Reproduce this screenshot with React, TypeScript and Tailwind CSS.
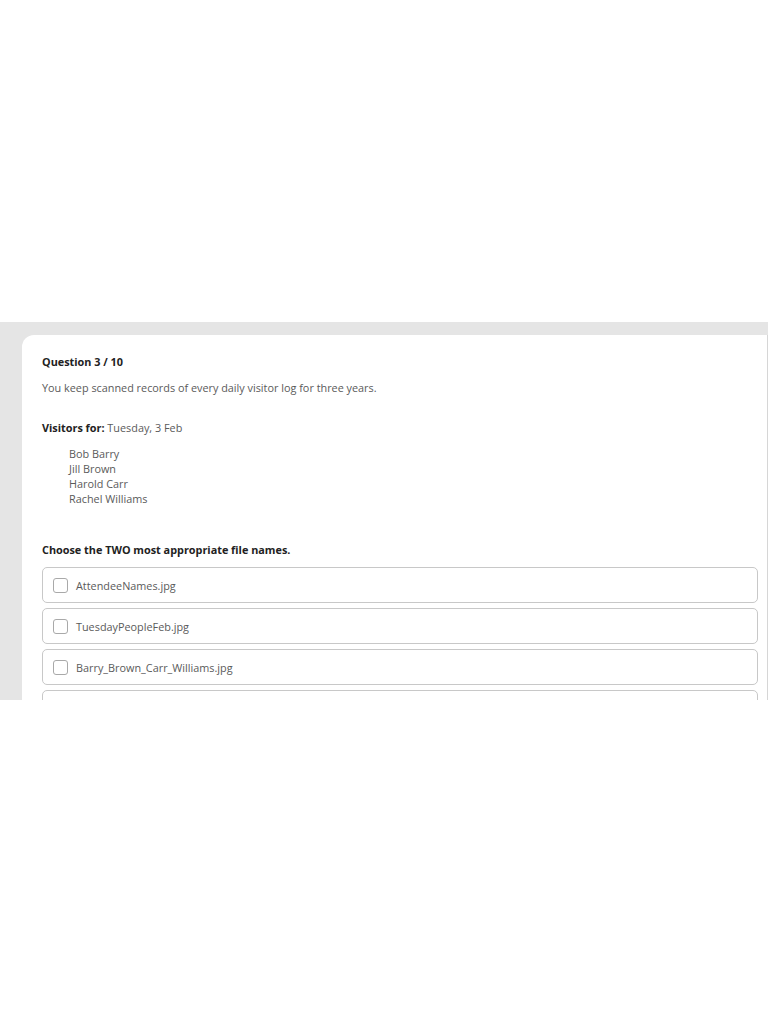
const visitors = ['Bob Barry', 'Jill Brown', 'Harold Carr', 'Rachel Williams']

// the fourth answer is cut off by the panel edge, only its box shows
const options = ['AttendeeNames.jpg', 'TuesdayPeopleFeb.jpg', 'Barry_Brown_Carr_Williams.jpg', '']

export default function App() {
  return (
    <div className="h-[1024px] flex flex-col bg-white font-['Open_Sans',sans-serif] text-[10.85px] leading-[15px]">
      <div className="h-[322px] shrink-0" />
      <div className="h-[378px] shrink-0 overflow-hidden bg-[#e5e5e5] pt-[13px] pl-[22px]">
        <div className="h-full bg-white rounded-tl-[12px] pl-5 pr-[9px] pt-[19px] border-r border-[#d6d6d6]">
          <div className="font-bold text-[#222]">Question 3 / 10</div>
          <p className="mt-[11px] text-[#5a5a5a]">
            You keep scanned records of every daily visitor log for three years.
          </p>
          <p className="mt-[25px] text-[#5a5a5a]">
            <span className="font-bold text-[#222]">Visitors for:</span> Tuesday, 3 Feb
          </p>
          <ul className="mt-[11px] pl-[27px] text-[#5a5a5a]">
            {visitors.map((v) => (
              <li key={v}>{v}</li>
            ))}
          </ul>
          <div className="mt-9 font-bold text-[#222]">Choose the TWO most appropriate file names.</div>
          <div className="mt-[10px] flex flex-col gap-[5px]">
            {options.map((o, i) => (
              <label
                key={i}
                className="h-9 shrink-0 flex items-center border border-[#c8c8c8] rounded-[5px] pl-[10px] text-[#5a5a5a]"
              >
                <span className="w-[15px] h-[15px] border border-[#a9a9a9] rounded-[3px] bg-white shrink-0" />
                <span className="ml-[8px]">{o}</span>
              </label>
            ))}
          </div>
        </div>
      </div>
      <div className="flex-1" />
    </div>
  )
}
